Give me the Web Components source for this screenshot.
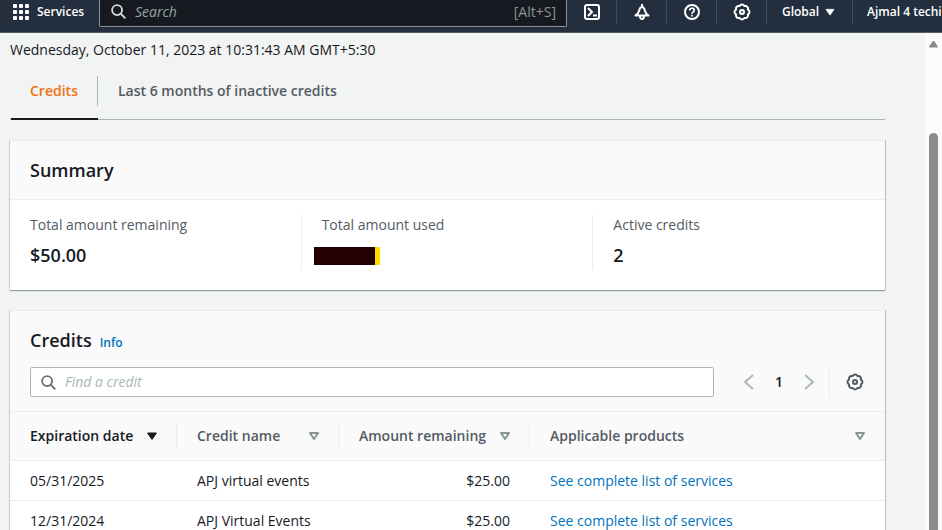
<!DOCTYPE html>
<html lang="en">
<head>
<meta charset="utf-8">
<meta name="viewport" content="width=device-width, initial-scale=1">
<title>Credits</title>
<style>
  html, body { height: 100%; }
  body {
    margin: 0;
    overflow: hidden;
    background: #f2f3f3;
    color: #16191f;
    font: 14px/20px "Open Sans", "Noto Sans", sans-serif;
  }
</style>
</head>
<body>
<console-page>
  <top-bar slot="header" account="Ajmal 4 techi" region="Global"></top-bar>
  <time>Wednesday, October 11, 2023 at 10:31:43 AM GMT+5:30</time>
  <tab-list>
    <button role="tab" aria-selected="true">Credits</button>
    <button role="tab" aria-selected="false">Last 6 months of inactive credits</button>
  </tab-list>
  <panel-card heading="Summary">
    <stat-row>
      <stat-item label="Total amount remaining">$50.00</stat-item>
      <stat-item label="Total amount used"><redacted-value></redacted-value></stat-item>
      <stat-item label="Active credits">2</stat-item>
    </stat-row>
  </panel-card>
  <panel-card heading="Credits" info>
    <filter-bar slot="tools"></filter-bar>
    <credits-table></credits-table>
  </panel-card>
</console-page>

<script>
const GEAR = "M5.55 2.1A2.7 2.7 0 0 1 10.450 2.100 2.700 2.700 0 0 1 13.900 5.550 2.700 2.700 0 0 1 13.900 10.450 2.700 2.700 0 0 1 10.450 13.900 2.700 2.700 0 0 1 5.550 13.900 2.700 2.700 0 0 1 2.100 10.450 2.700 2.700 0 0 1 2.100 5.550 2.700 2.700 0 0 1 5.550 2.100z";

const ICONS = {
  grid: `<g fill="currentColor" stroke="none">${[0, 6, 12].map(y => [0, 6, 12].map(x => `<rect x="${x}" y="${y}" width="4" height="4" rx="1"/>`).join("")).join("")}</g>`,
  search: `<circle cx="6.5" cy="6.5" r="5.3"/><path d="m10.300 10.300 5 5"/>`,
  terminal: `<rect x="1" y="1" width="14" height="14" rx="2"/><path d="m4 4 4 4-4 4M9 11.5h4"/>`,
  bell: `<path d="M8 0v3M1.500 11.500c2-1 3-2.500 3.500-4.500C5.500 4.500 6 3 8 3s2.500 1.500 3 4c.5 2 1.500 3.500 3.500 4.500zM6 12c0 4 4 4 4 0" stroke-linejoin="round"/>`,
  help: `<circle cx="8" cy="8" r="7"/><path d="M5.700 6.500c0-3 4.600-3 4.600-.2C10.300 8 8 8 8 9.700M8 10.800v1.700" stroke-width="1.700"/>`,
  gear: `<path d="${GEAR}" stroke-linejoin="round"/><circle cx="8" cy="8" r="2"/>`,
  prev: `<path d="m12 1-8 7 8 7"/>`,
  next: `<path d="m4 1 8 7-8 7"/>`,
  down: `<path d="M3.500 5h9L8 11.500z" fill="currentColor" stroke-linejoin="round" stroke-width="1"/>`,
  sort: `<path d="M4 5h8l-4 6z" stroke-linejoin="round"/>`
};

class UiIcon extends HTMLElement {
  connectedCallback() {
    const root = this.shadowRoot || this.attachShadow({ mode: "open" });
    root.innerHTML = `
      <style>
        :host { display: inline-flex; flex: none; width: 16px; height: 16px; }
        svg { width: 100%; height: 100%; overflow: visible; }
      </style>
      <svg viewBox="0 0 16 16" fill="none" stroke="currentColor" stroke-width="2" aria-hidden="true">${ICONS[this.getAttribute("name")]}</svg>
    `;
  }
}

class ConsolePage extends HTMLElement {
  constructor() {
    super();
    this.attachShadow({ mode: "open" }).innerHTML = `
      <style>
        :host { display: flex; flex-direction: column; height: 100vh; overflow: hidden; }
        .view { display: flex; flex: 1; min-height: 0; }
        main {
          flex: 1;
          min-width: 0;
          display: flex;
          flex-direction: column;
          gap: 20px;
          padding: 7px 40px 0 10px;
          overflow: hidden;
        }
        ::slotted(*) { flex: none; }
        ::slotted(time) { height: 16px; }
      </style>
      <slot name="header"></slot>
      <div class="view">
        <main><slot></slot></main>
        <page-scrollbar></page-scrollbar>
      </div>
    `;
  }
}

class PageScrollbar extends HTMLElement {
  constructor() {
    super();
    this.attachShadow({ mode: "open" }).innerHTML = `
      <style>
        :host { display: flex; flex-direction: column; align-items: center; flex: none; width: 17px; padding-top: 7px; background: #fbfbfb; }
        svg { flex: none; width: 9px; height: 8px; fill: #8b8b8b; }
        .thumb { flex: 1; width: 9px; margin-top: 85px; border-radius: 5px 5px 0 0; background: #8b8b8b; }
      </style>
      <svg viewBox="0 0 10 8" aria-hidden="true"><path d="M4 1q1-1 2 0l4 6q0 1-1 1H1q-1 0-1-1z"/></svg>
      <div class="thumb"></div>
    `;
  }
}

class TopBar extends HTMLElement {
  constructor() {
    super();
    this.attachShadow({ mode: "open" }).innerHTML = `
      <style>
        :host {
          display: flex;
          align-items: flex-start;
          flex: none;
          height: 32px;
          border-bottom: 1px solid #545b64;
          background: #232f3e;
          color: #fff;
          font-size: 12px;
          font-weight: 600;
        }
        button {
          display: flex;
          align-items: center;
          justify-content: center;
          box-sizing: border-box;
          flex: none;
          width: 50px;
          height: 24px;
          padding: 0;
          border: 0;
          border-right: 1px solid #414d5c;
          background: none;
          color: inherit;
          font: inherit;
          white-space: nowrap;
        }
        .services { gap: 8px; width: 99px; border: 0; justify-content: flex-start; padding-left: 13px; }
        .region { gap: 4px; width: 86px; }
        .region ui-icon { width: 14px; height: 14px; }
        .account { justify-content: flex-start; width: 89px; padding-left: 14px; border: 0; }
        label {
          display: flex;
          align-items: center;
          gap: 9px;
          box-sizing: border-box;
          flex: 1;
          min-width: 0;
          height: 27px;
          padding: 0 10px 3px 11px;
          border: 1px solid #879596;
          border-top: 0;
          border-radius: 0 0 2px 2px;
          background: #16191f;
        }
        label ui-icon { width: 15px; height: 15px; color: #d5dbdb; }
        input { flex: 1; min-width: 0; padding: 0; border: 0; outline: 0; background: none; color: #fff; font: 14px/20px "Open Sans", sans-serif; }
        input::placeholder { color: #95a5a6; font-style: italic; opacity: 1; }
        kbd { color: #879596; font: 14px/20px "Open Sans", sans-serif; }
      </style>
      <button class="services"><ui-icon name="grid"></ui-icon>Services</button>
      <label>
        <ui-icon name="search"></ui-icon>
        <input type="text" placeholder="Search" aria-label="Search">
        <kbd>[Alt+S]</kbd>
      </label>
      <button aria-label="CloudShell"><ui-icon name="terminal"></ui-icon></button>
      <button aria-label="Notifications"><ui-icon name="bell"></ui-icon></button>
      <button aria-label="Help"><ui-icon name="help"></ui-icon></button>
      <button aria-label="Settings"><ui-icon name="gear"></ui-icon></button>
      <button class="region"><span></span><ui-icon name="down"></ui-icon></button>
      <button class="account"></button>
    `;
  }

  connectedCallback() {
    this.shadowRoot.querySelector(".region span").textContent = this.getAttribute("region");
    this.shadowRoot.querySelector(".account").textContent = this.getAttribute("account");
  }
}

class TabList extends HTMLElement {
  constructor() {
    super();
    this.attachShadow({ mode: "open" }).innerHTML = `
      <style>
        :host { display: flex; align-items: flex-start; height: 43px; border-bottom: 1px solid #aab7b8; }
        ::slotted(button) {
          height: 44px;
          padding: 0 20px 14px;
          border: 0;
          background: none;
          color: #545b64;
          font: 600 14px/30px "Open Sans", sans-serif;
        }
        ::slotted([aria-selected="true"]) {
          background:
            linear-gradient(#16191f, #16191f) no-repeat left 1px bottom / 100% 2px,
            linear-gradient(#aab7b8, #aab7b8) no-repeat right top / 1px 30px;
          color: #ec7211;
        }
      </style>
      <slot></slot>
    `;
    this.setAttribute("role", "tablist");
  }
}

class PanelCard extends HTMLElement {
  constructor() {
    super();
    this.attachShadow({ mode: "open" }).innerHTML = `
      <style>
        :host { display: block; background: #fff; box-shadow: 0 1px 1px rgba(0, 28, 36, .4), 1px 0 0 #c4cccc, -1px 0 0 #d5dbdb; border-top: 1px solid #eaeded; }
        header { padding: 18px 20px 14px; border-bottom: 1px solid #eaeded; background: #fafafa; }
        :host(:not([info])) header { padding-bottom: 17px; }
        .title { display: flex; align-items: baseline; gap: 8px; }
        h2 { margin: 0; font-size: 18px; line-height: 23px; font-weight: 600; }
        a { color: #0073bb; font-size: 12px; font-weight: 600; text-decoration: none; }
      </style>
      <header>
        <div class="title"><h2></h2></div>
        <slot name="tools"></slot>
      </header>
      <slot></slot>
    `;
  }

  connectedCallback() {
    this.shadowRoot.querySelector("h2").textContent = this.getAttribute("heading");
    if (this.hasAttribute("info") && !this.shadowRoot.querySelector("a")) {
      this.shadowRoot.querySelector(".title").insertAdjacentHTML("beforeend", `<a href="#info">Info</a>`);
    }
  }
}

class StatRow extends HTMLElement {
  constructor() {
    super();
    this.attachShadow({ mode: "open" }).innerHTML = `
      <style>
        :host { display: grid; grid-template-columns: repeat(3, 1fr); padding: 15px 0 20px; }
        ::slotted(:not(:last-child)) { border-right: 1px solid #eaeded; }
      </style>
      <slot></slot>
    `;
  }
}

class StatItem extends HTMLElement {
  constructor() {
    super();
    this.attachShadow({ mode: "open" }).innerHTML = `
      <style>
        :host { display: block; padding: 0 20px; }
        .label { color: #545b64; }
        .value { height: 25px; margin-top: 10px; font-size: 18px; line-height: 20px; font-weight: 600; }
      </style>
      <div class="label"></div>
      <div class="value"><slot></slot></div>
    `;
  }

  connectedCallback() {
    this.shadowRoot.querySelector(".label").textContent = this.getAttribute("label");
  }
}

// Marker bar laid over a hidden amount
class RedactedValue extends HTMLElement {
  constructor() {
    super();
    this.attachShadow({ mode: "open" }).innerHTML = `
      <style>
        :host { display: block; position: relative; }
        span { position: absolute; left: -8px; top: 2px; box-sizing: border-box; width: 66px; height: 18px; border-right: 5px solid #ffd900; background: #250000; }
      </style>
      <span></span>
    `;
  }
}

class FilterBar extends HTMLElement {
  constructor() {
    super();
    this.attachShadow({ mode: "open" }).innerHTML = `
      <style>
        :host { display: flex; align-items: center; margin-top: 14px; }
        label {
          display: flex;
          align-items: center;
          gap: 9px;
          box-sizing: border-box;
          flex: 1;
          height: 30px;
          margin-right: 20px;
          padding: 0 10px;
          border: 1px solid #aab7b8;
          border-radius: 2px;
          background: #fff;
        }
        label ui-icon { width: 15px; height: 15px; color: #687078; }
        input { flex: 1; min-width: 0; padding: 0; border: 0; outline: 0; background: none; font: inherit; }
        input::placeholder { color: #aab7b8; font-style: italic; opacity: 1; }
        nav { display: flex; align-items: center; height: 30px; padding-right: 5px; border-right: 1px solid #eaeded; }
        button { display: flex; align-items: center; justify-content: center; width: 30px; height: 30px; padding: 0; border: 0; background: none; color: #aab7b8; font: inherit; }
        button[aria-current] { color: #16191f; font-weight: 600; }
        .settings { width: 20px; margin-left: 15px; color: #545b64; }
      </style>
      <label>
        <ui-icon name="search"></ui-icon>
        <input type="text" placeholder="Find a credit" aria-label="Find a credit">
      </label>
      <nav aria-label="Pagination">
        <button aria-label="Previous page"><ui-icon name="prev"></ui-icon></button>
        <button aria-current="page">1</button>
        <button aria-label="Next page"><ui-icon name="next"></ui-icon></button>
      </nav>
      <button class="settings" aria-label="Preferences"><ui-icon name="gear"></ui-icon></button>
    `;
  }
}

class CreditsTable extends HTMLElement {
  constructor() {
    super();
    this.columns = ["Expiration date", "Credit name", "Amount remaining", "Applicable products"];
    this.rows = [
      ["05/31/2025", "APJ virtual events", "$25.00"],
      ["12/31/2024", "APJ Virtual Events", "$25.00"]
    ];
    this.attachShadow({ mode: "open" });
  }

  connectedCallback() {
    this.shadowRoot.innerHTML = `
      <style>
        :host { display: block; }
        table { width: 100%; table-layout: fixed; border-collapse: separate; border-spacing: 0; }
        th, td { padding: 0 20px; border-bottom: 1px solid #eaeded; text-align: left; white-space: nowrap; }
        th { height: 48px; background: #fafafa linear-gradient(#eaeded, #eaeded) no-repeat right center / 1px 24px; }
        th:last-child { background: #fafafa; }
        td { height: 39px; }
        td:nth-child(3) { text-align: right; }
        th button { display: flex; align-items: center; justify-content: space-between; width: 100%; padding: 0; border: 0; background: none; color: #545b64; font: inherit; font-weight: 600; }
        th[aria-sort] button { color: #16191f; }
        th ui-icon { color: #879596; margin-right: -3px; }
        th[aria-sort] ui-icon { color: inherit; }
        a { color: #0073bb; text-decoration: none; }
      </style>
      <table>
        <colgroup><col style="width: 167px"><col style="width: 162px"><col style="width: 191px"><col></colgroup>
        <thead><tr>
          ${this.columns.map((name, i) => `<th ${i ? "" : `aria-sort="descending"`}><button>${name}<ui-icon name="${i ? "sort" : "down"}"></ui-icon></button></th>`).join("")}
        </tr></thead>
        <tbody>
          ${this.rows.map(row => `<tr>${row.map(cell => `<td>${cell}</td>`).join("")}<td><a href="#services">See complete list of services</a></td></tr>`).join("")}
        </tbody>
      </table>
    `;
  }
}

customElements.define("ui-icon", UiIcon);
customElements.define("page-scrollbar", PageScrollbar);
customElements.define("console-page", ConsolePage);
customElements.define("top-bar", TopBar);
customElements.define("tab-list", TabList);
customElements.define("panel-card", PanelCard);
customElements.define("stat-row", StatRow);
customElements.define("stat-item", StatItem);
customElements.define("redacted-value", RedactedValue);
customElements.define("filter-bar", FilterBar);
customElements.define("credits-table", CreditsTable);
</script>
</body>
</html>
